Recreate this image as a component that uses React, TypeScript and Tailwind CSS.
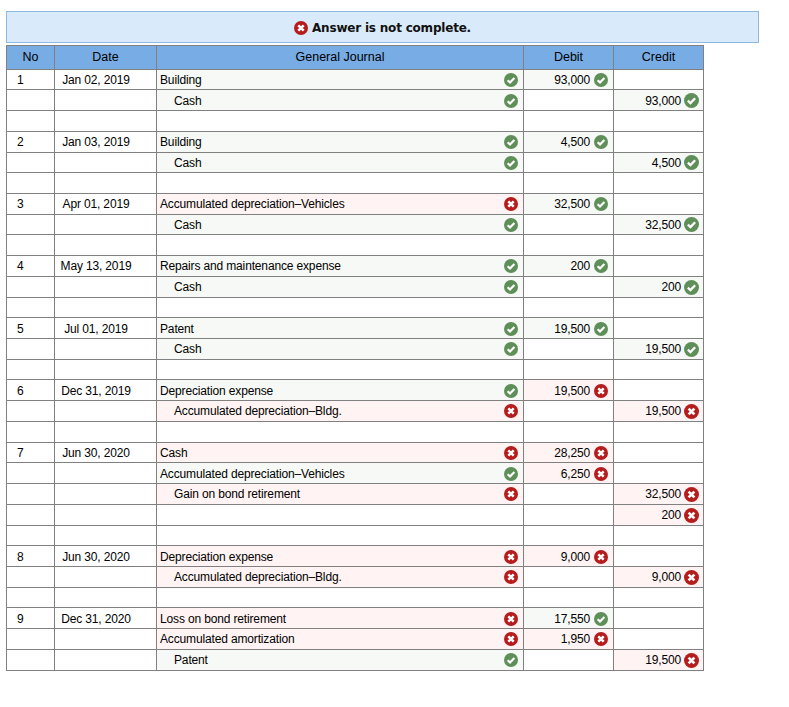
const FONT = "font-['Liberation_Sans',Arial,sans-serif]";

type Mark = "ok" | "no" | null;
type Row = {
  no?: string;
  date?: string;
  acct?: string;
  indent?: boolean;
  jm?: Mark;
  debit?: string;
  dm?: Mark;
  credit?: string;
  cm?: Mark;
  short?: boolean;
  low?: boolean;
};

const rows: Row[] = [
  { short: true, no: "1", date: "Jan 02, 2019", acct: "Building", jm: "ok", debit: "93,000", dm: "ok" },
  { low: true, acct: "Cash", indent: true, jm: "ok", credit: "93,000", cm: "ok" },
  {},
  { no: "2", date: "Jan 03, 2019", acct: "Building", jm: "ok", debit: "4,500", dm: "ok" },
  { short: true, acct: "Cash", indent: true, jm: "ok", credit: "4,500", cm: "ok" },
  {},
  { no: "3", date: "Apr 01, 2019", acct: "Accumulated depreciation–Vehicles", jm: "no", debit: "32,500", dm: "ok" },
  { short: true, acct: "Cash", indent: true, jm: "ok", credit: "32,500", cm: "ok" },
  {},
  { no: "4", date: "May 13, 2019", acct: "Repairs and maintenance expense", jm: "ok", debit: "200", dm: "ok" },
  { acct: "Cash", indent: true, jm: "ok", credit: "200", cm: "ok" },
  { short: true },
  { low: true, no: "5", date: "Jul 01, 2019", acct: "Patent", jm: "ok", debit: "19,500", dm: "ok" },
  { acct: "Cash", indent: true, jm: "ok", credit: "19,500", cm: "ok" },
  { short: true },
  { low: true, no: "6", date: "Dec 31, 2019", acct: "Depreciation expense", jm: "ok", debit: "19,500", dm: "no" },
  { acct: "Accumulated depreciation–Bldg.", indent: true, jm: "no", credit: "19,500", cm: "no" },
  {},
  { short: true, no: "7", date: "Jun 30, 2020", acct: "Cash", jm: "no", debit: "28,250", dm: "no" },
  { low: true, acct: "Accumulated depreciation–Vehicles", jm: "ok", debit: "6,250", dm: "no" },
  { acct: "Gain on bond retirement", indent: true, jm: "no", credit: "32,500", cm: "no" },
  { credit: "200", cm: "no" },
  { short: true },
  { low: true, no: "8", date: "Jun 30, 2020", acct: "Depreciation expense", jm: "no", debit: "9,000", dm: "no" },
  { acct: "Accumulated depreciation–Bldg.", indent: true, jm: "no", credit: "9,000", cm: "no" },
  { short: true },
  { low: true, no: "9", date: "Dec 31, 2020", acct: "Loss on bond retirement", jm: "no", debit: "17,550", dm: "ok" },
  { acct: "Accumulated amortization", jm: "no", debit: "1,950", dm: "no" },
  { acct: "Patent", indent: true, jm: "ok", credit: "19,500", cm: "no" },
];

function Icon({ mark, size = 14 }: { mark: "ok" | "no"; size?: number }) {
  return (
    <svg width={size} height={size} viewBox="0 0 14 14" className="block shrink-0">
      <circle cx="7" cy="7" r="7" fill={mark === "ok" ? "#5f8f58" : "#b71c1c"} />
      {mark === "ok" ? (
        <path d="M3.6 7.2 L6 9.4 L10.4 4.9" fill="none" stroke="#fff" strokeWidth="2.2" />
      ) : (
        <path d="M4.3 4.3 L9.7 9.7 M9.7 4.3 L4.3 9.7" fill="none" stroke="#fff" strokeWidth="2.5" />
      )}
    </svg>
  );
}

const tint = (m?: Mark) => (m === "ok" ? "bg-[#f6f9f5]" : m === "no" ? "bg-[#fff4f3]" : "bg-white");
const head = "border border-[#808080] p-0 align-middle text-center font-normal text-[12.5px] tracking-normal text-black";

export default function App() {
  return (
    <div className={`${FONT} w-[789px] h-[707px] bg-white pt-[11px] pl-[6px] text-[12px] tracking-[-0.15px] text-black`}>
      <div className="w-[753px] h-[32px] pt-[1px] bg-[#d9ebfa] border border-[#8fb8e3] flex items-center justify-center gap-[4px] font-['DejaVu_Sans',Verdana,sans-serif] font-bold text-[12px] tracking-[-0.2px] text-[#111]">
        <Icon mark="no" />
        <span>Answer is not complete.</span>
      </div>
      <table className="mt-[2px] w-[697px] table-fixed border-collapse">
        <colgroup>
          <col className="w-[48px]" />
          <col className="w-[102px]" />
          <col className="w-[367px]" />
          <col className="w-[90px]" />
          <col className="w-[90px]" />
        </colgroup>
        <thead>
          <tr className="h-[24px] bg-[#78ace4]">
            <th className={head}>No</th>
            <th className={head}>Date</th>
            <th className={head}>General Journal</th>
            <th className={head}>Debit</th>
            <th className={head}>Credit</th>
          </tr>
        </thead>
        <tbody>
          {rows.map((r, i) => {
            const cell = `border border-[#808080] p-0 align-middle ${r.low ? "pt-[1px]" : ""}`;
            return (
              <tr key={i} className={r.short ? "h-[20px]" : "h-[21px]"}>
                <td className={`${cell} pl-[10px]`}>{r.no}</td>
                <td className={`${cell} text-center pr-[19px]`}>{r.date}</td>
                <td className={`${cell} ${tint(r.jm)}`}>
                  <div className={`flex items-center justify-between pr-[5px] ${r.indent ? "pl-[17px]" : "pl-[3px]"}`}>
                    <span>{r.acct}</span>
                    {r.jm && <Icon mark={r.jm} />}
                  </div>
                </td>
                <td className={`${cell} ${r.debit ? tint(r.dm) : "bg-white"}`}>
                  <div className="flex items-center justify-end gap-[4px] pr-[5px]">
                    <span>{r.debit}</span>
                    {r.dm && <Icon mark={r.dm} />}
                  </div>
                </td>
                <td className={`${cell} ${r.credit ? tint(r.cm) : "bg-white"}`}>
                  <div className="flex items-center justify-end gap-[3px] pr-[4px]">
                    <span>{r.credit}</span>
                    {r.cm && <Icon mark={r.cm} size={15} />}
                  </div>
                </td>
              </tr>
            );
          })}
        </tbody>
      </table>
    </div>
  );
}
